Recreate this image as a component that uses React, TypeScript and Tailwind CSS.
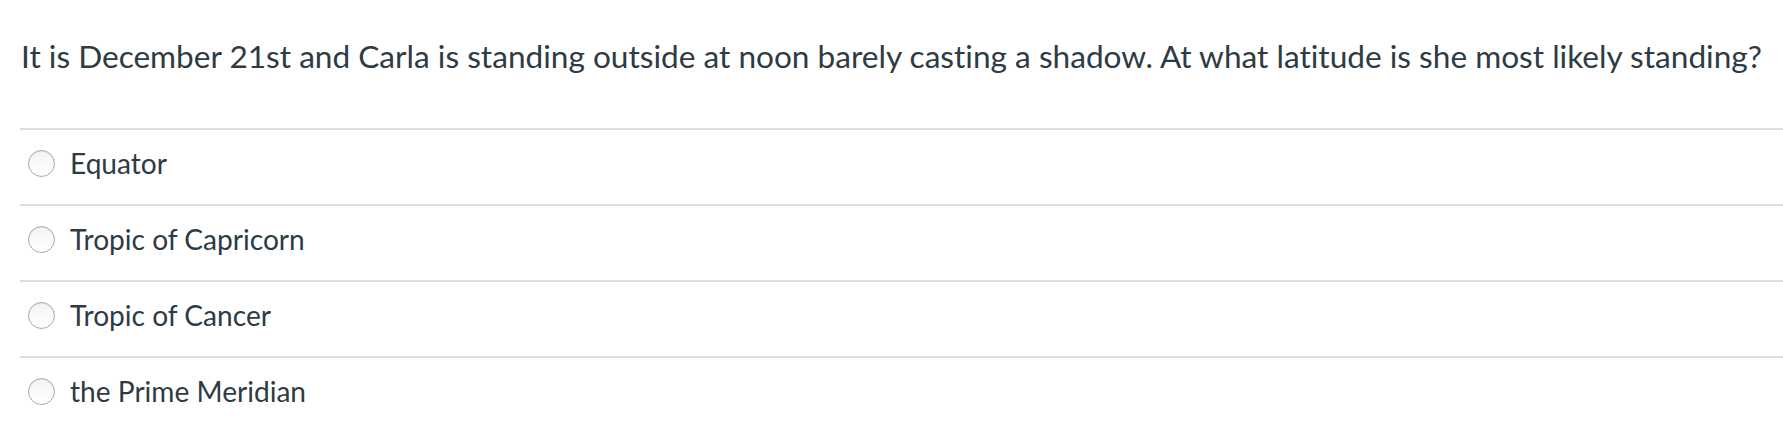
import React from 'react'

const answers = ['Equator', 'Tropic of Capricorn', 'Tropic of Cancer', 'the Prime Meridian']

const Radio = () => (
  <span className="block h-[27px] w-[27px] shrink-0 rounded-full border border-[#a9a9a9] bg-gradient-to-b from-[#f4f4f4] to-white shadow-[inset_0_1px_1px_rgba(0,0,0,0.08)]" />
)

export default function App() {
  return (
    <div className="min-h-screen bg-white font-['Lato','Open_Sans',sans-serif] text-[#2d3b45] [font-variant-ligatures:none]">
      {/* Question */}
      <div className="pl-[21px] pt-[36px] pb-[52px]">
        <p className="whitespace-nowrap text-[31.6px] leading-[40px]">
          It is December 21st and Carla is standing outside at noon barely casting a shadow. At what latitude is she most likely standing?
        </p>
      </div>

      {/* Answers */}
      <div className="ml-[20px]">
        {answers.map((a) => (
          <div key={a} className="flex items-center gap-[15px] border-t-2 border-[#dddddd] pl-[8px] pt-[13px] pb-[21px]">
            <Radio />
            <span className="text-[28.1px] leading-[40px]">{a}</span>
          </div>
        ))}
      </div>
    </div>
  )
}
